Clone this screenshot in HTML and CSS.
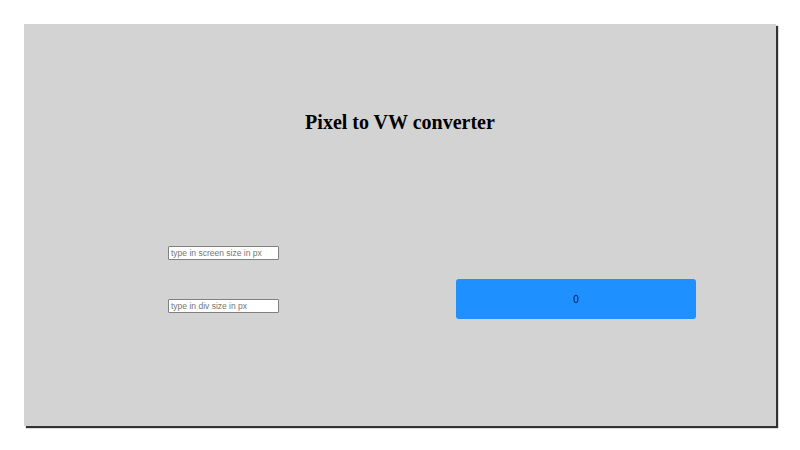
FILE: index.html
```html
<!DOCTYPE html>
<html>
<head>
<meta charset="utf-8">
<link rel="stylesheet" href="styles.css">
</head>
<body>
<div class="panel">
  <h2 class="title">Pixel to VW converter</h2>
  <div class="row">
    <div class="inputs">
      <input class="field" type="text" placeholder="type in screen size in px">
      <input class="field" type="text" placeholder="type in div size in px">
    </div>
    <div class="result">
      <div class="output">0</div>
    </div>
  </div>
</div>
</body>
</html>
```
FILE: styles.css
```css
html, body {
  margin: 0;
  padding: 0;
  background: #ffffff;
}
body {
  padding: 24px;
  height: 450px;
  box-sizing: border-box;
}
.panel {
  width: 752px;
  height: 402px;
  background: #d3d3d3;
  box-shadow: 2px 2px 1px #333333;
  box-sizing: border-box;
  padding-top: 86px;
  display: flex;
  flex-direction: column;
}
.title {
  margin: 0;
  font-family: "Liberation Serif", serif;
  font-weight: bold;
  font-size: 20px;
  line-height: 24px;
  text-align: center;
  color: #000;
}
.row {
  display: flex;
  align-items: flex-start;
  margin-top: 112px;
  padding-left: 144px;
}
.inputs {
  display: flex;
  flex-direction: column;
  gap: 39px;
}
.field {
  box-sizing: border-box;
  width: 111px;
  height: 14px;
  margin: 0;
  padding: 0 2px;
  border: 1px solid #808080;
  border-radius: 1px;
  background: #ffffff;
  font-family: "Liberation Sans", Arial, sans-serif;
  font-size: 8.5px;
  color: #000;
}
.field::placeholder {
  color: #757575;
}
.result {
  margin-left: 177px;
  margin-top: 33px;
}
.output {
  width: 240px;
  height: 40px;
  border-radius: 3px;
  background: #1e90ff;
  display: flex;
  align-items: center;
  justify-content: center;
  font-family: "Liberation Sans", Arial, sans-serif;
  font-size: 10px;
  color: #0a1a33;
}
```
